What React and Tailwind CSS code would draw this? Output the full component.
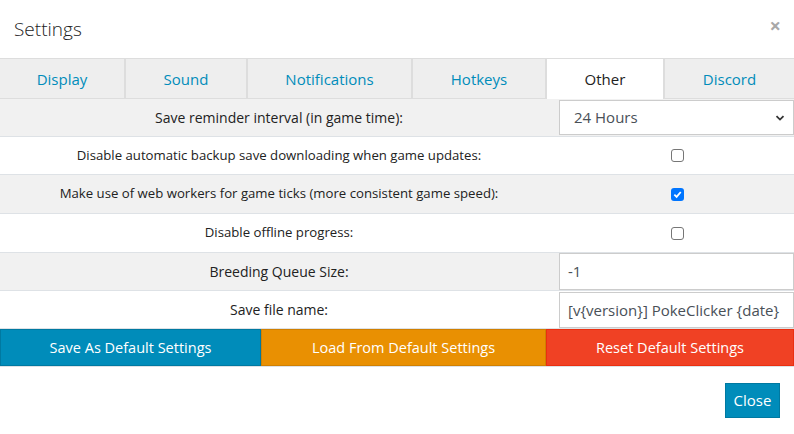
import React, { useState } from "react";

const tabs = [
  { name: "Display", w: "w-[126px]" },
  { name: "Sound", w: "w-[122px]" },
  { name: "Notifications", w: "w-[165px]" },
  { name: "Hotkeys", w: "w-[134px]" },
  { name: "Other", w: "w-[118px]" },
  { name: "Discord", w: "flex-1" },
];

const Check = ({ checked }) => (
  <div className="flex items-center justify-center">
    {checked ? (
      <div className="w-[13px] h-[13px] rounded-[3px] bg-[#0075ff] flex items-center justify-center">
        <svg width="9" height="9" viewBox="0 0 10 10">
          <path d="M1.5 5.2 L4 7.6 L8.6 2.2" fill="none" stroke="white" strokeWidth="2" />
        </svg>
      </div>
    ) : (
      <div className="w-[13px] h-[13px] rounded-[3px] border border-[#767676] bg-white" />
    )}
  </div>
);

const Row = ({ label, gray, h, small, children }) => (
  <div className={`flex border-b border-[#dee2e6] ${h} ${gray ? "bg-[#f1f1f1]" : "bg-white"}`}>
    <div className={`w-[558px] flex items-center justify-center text-[#222] ${small ? "text-[13.2px]" : "text-[14px]"}`}>
      {label}
    </div>
    <div className="flex-1 flex items-stretch">{children}</div>
  </div>
);

const App = () => {
  const [active] = useState("Other");

  return (
    <div className="w-[794px] h-[434px] bg-white flex flex-col font-['Open_Sans',sans-serif] text-[#222]">
      <div className="h-[59px] flex items-center justify-between px-[14px] border-b border-[#dddddd]">
        <h5 className="text-[19px] font-light text-[#222]">Settings</h5>
        <span className="text-[20px] font-bold text-[#a8a8a8] leading-none -mr-[1px] -mt-[6px]">×</span>
      </div>

      <div className="flex h-[40px] border-b border-[#dddddd]">
        {tabs.map((t) => (
          <div
            key={t.name}
            className={`${t.w} flex items-center justify-center pt-px text-[15px] border-r-2 border-[#dddddd] last:border-r-0 ${
              active === t.name ? "bg-white text-[#222] -mb-px" : "bg-[#eeeeee] text-[#008cba]"
            }`}
          >
            {t.name}
          </div>
        ))}
      </div>

      <Row label="Save reminder interval (in game time):" gray h="h-[38px]">
        <div className="flex-1 my-px ml-px bg-white border border-[#cccccc] flex items-center justify-between pl-[14px] pr-[8px] text-[15px] text-[#495057]">
          <span>24 Hours</span>
          <svg width="10" height="10" viewBox="0 0 10 10">
            <path d="M1.5 3.2 L5 6.6 L8.5 3.2" fill="none" stroke="#333" strokeWidth="1.8" />
          </svg>
        </div>
      </Row>
      <Row label="Disable automatic backup save downloading when game updates:" small h="h-[38px]">
        <div className="flex-1 flex items-center justify-center pl-[3px]"><Check /></div>
      </Row>
      <Row label="Make use of web workers for game ticks (more consistent game speed):" small gray h="h-[39px]">
        <div className="flex-1 flex items-center justify-center pl-[3px]"><Check checked /></div>
      </Row>
      <Row label="Disable offline progress:" small h="h-[39px]">
        <div className="flex-1 flex items-center justify-center pl-[3px]"><Check /></div>
      </Row>
      <Row label="Breeding Queue Size:" gray h="h-[38px]">
        <div className="flex-1 ml-px bg-white border border-[#cccccc] flex items-center pl-[8px] text-[15px] text-[#495057]">-1</div>
      </Row>
      <Row label="Save file name:" h="h-[38px]">
        <div className="flex-1 ml-px mt-px bg-white border border-[#cccccc] flex items-center pl-[8px] text-[15px] text-[#495057] whitespace-nowrap overflow-hidden">
          [v{"{version}"}] PokeClicker {"{date}"}
        </div>
      </Row>

      <div className="flex h-[38px] border-b border-[#dee2e6] text-[14.5px] text-white">
        <button className="w-[261px] bg-[#008cba] border border-[#0079a1] flex items-center justify-center">
          Save As Default Settings
        </button>
        <button className="w-[285px] bg-[#e99002] border border-[#d08002] flex items-center justify-center">
          Load From Default Settings
        </button>
        <button className="flex-1 bg-[#f04124] border border-[#ea2f10] flex items-center justify-center">
          Reset Default Settings
        </button>
      </div>

      <div className="flex-1 flex items-start justify-end px-[14px] pt-[16px]">
        <button className="w-[55px] h-[35px] bg-[#008cba] border border-[#0079a1] text-white text-[15px]">
          Close
        </button>
      </div>
    </div>
  );
};

export default App;
